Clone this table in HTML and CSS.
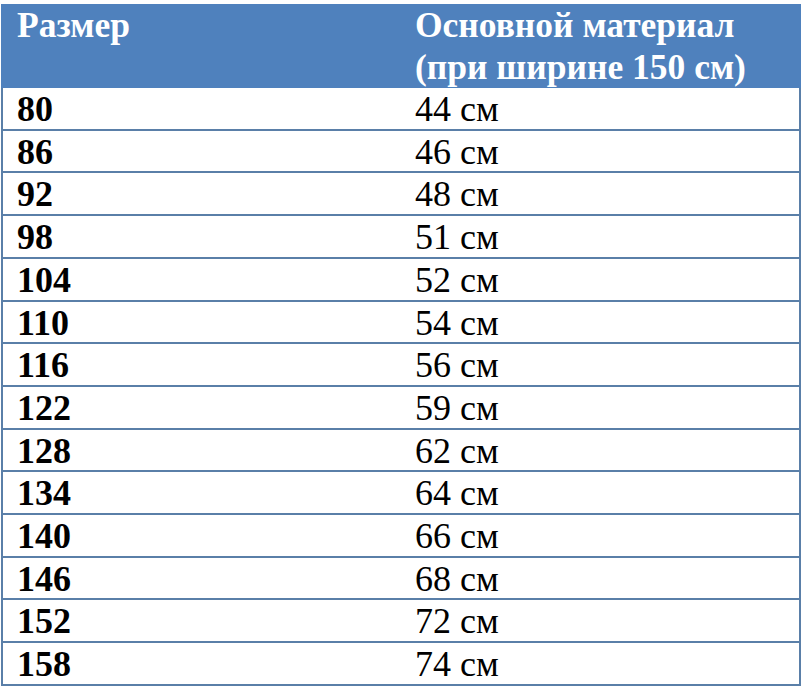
FILE: index.html
```html
<!DOCTYPE html>
<html lang="ru">
<head>
<meta charset="utf-8">
<title>Размер</title>
<link rel="stylesheet" href="styles.css">
</head>
<body>
<div class="sheet">
  <div class="head">
    <div class="cell c1">Размер</div>
    <div class="cell c2">Основной материал<br>(при ширине 150 см)</div>
  </div>
  <div class="body">
    <div class="row"><div class="cell c1">80</div><div class="cell c2">44 см</div></div>
    <div class="row"><div class="cell c1">86</div><div class="cell c2">46 см</div></div>
    <div class="row"><div class="cell c1">92</div><div class="cell c2">48 см</div></div>
    <div class="row"><div class="cell c1">98</div><div class="cell c2">51 см</div></div>
    <div class="row"><div class="cell c1">104</div><div class="cell c2">52 см</div></div>
    <div class="row"><div class="cell c1">110</div><div class="cell c2">54 см</div></div>
    <div class="row"><div class="cell c1">116</div><div class="cell c2">56 см</div></div>
    <div class="row"><div class="cell c1">122</div><div class="cell c2">59 см</div></div>
    <div class="row"><div class="cell c1">128</div><div class="cell c2">62 см</div></div>
    <div class="row"><div class="cell c1">134</div><div class="cell c2">64 см</div></div>
    <div class="row"><div class="cell c1">140</div><div class="cell c2">66 см</div></div>
    <div class="row"><div class="cell c1">146</div><div class="cell c2">68 см</div></div>
    <div class="row"><div class="cell c1">152</div><div class="cell c2">72 см</div></div>
    <div class="row"><div class="cell c1">158</div><div class="cell c2">74 см</div></div>
  </div>
</div>
</body>
</html>
```
FILE: styles.css
```css
html, body {
  margin: 0;
  padding: 0;
  background: #ffffff;
}
body {
  font-family: "Liberation Serif", "Times New Roman", serif;
  font-size: 36px;
  color: #000000;
}
.sheet {
  width: 800px;
  margin: 4px 0 0 1px;
}
.head {
  display: flex;
  background: #4f81bd;
  color: #ffffff;
  font-weight: bold;
  font-size: 35.5px;
  height: 84px;
  box-sizing: border-box;
  padding-top: 1px;
  line-height: 41.5px;
}
.head .c1 {
  width: 414px;
  padding-left: 16px;
  box-sizing: border-box;
}
.head .c2 {
  flex: 1;
}
.body {
  border-left: 2px solid #5a7fa8;
  border-right: 2px solid #5a7fa8;
}
.row {
  display: flex;
  height: 42.71px;
  box-sizing: border-box;
  padding-top: 2px;
  border-bottom: 2px solid #5a7fa8;
  line-height: 38.7px;
}
.row .c1 {
  width: 412px;
  padding-left: 14px;
  box-sizing: border-box;
  font-weight: bold;
}
.row .c2 {
  flex: 1;
}
```
